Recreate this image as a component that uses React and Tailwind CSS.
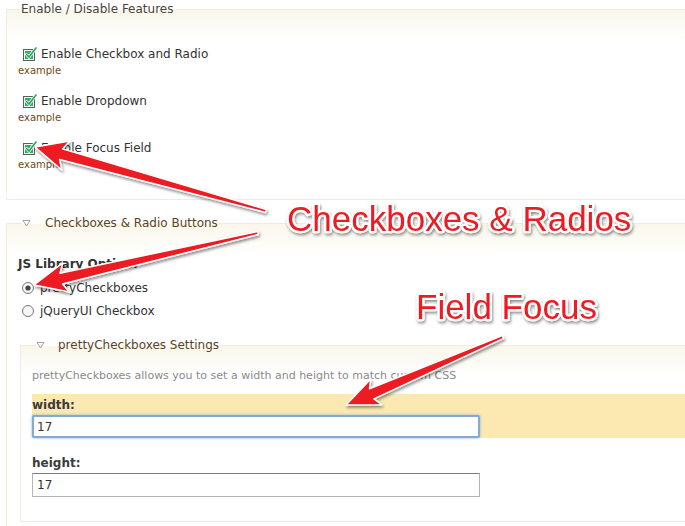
import React from 'react';

const Check = () => (
  <svg width="16" height="16" viewBox="0 0 16 16" className="shrink-0">
    <rect x="1.5" y="3.5" width="11" height="11" fill="#f4f4f4" stroke="#5d5d5d" strokeWidth="1" />
    <rect x="3" y="5" width="8" height="8" fill="#2fae68" />
    <path d="M4.5 8.5 L7 11 L14 2" fill="none" stroke="#fff" strokeWidth="3" strokeLinecap="round" />
    <path d="M4.5 8.5 L7 11 L14 2" fill="none" stroke="#27a35d" strokeWidth="1.6" strokeLinecap="round" />
  </svg>
);

const Radio = ({ on }) => (
  <svg width="14" height="14" viewBox="0 0 14 14" className="shrink-0">
    <circle cx="7" cy="7" r="5.5" fill="#f6f6f6" stroke="#777" strokeWidth="1" />
    {on && <circle cx="7" cy="7" r="2.6" fill="#444" />}
  </svg>
);

const Tri = () => (
  <svg width="9" height="8" viewBox="0 0 9 8" className="shrink-0">
    <path d="M1 1.5 H8 L4.5 7 Z" fill="none" stroke="#9a9a9a" strokeWidth="0.9" />
  </svg>
);

// tapered callout arrow, tail -> tip
const arrow = ([tx, ty], [hx, hy], headLen = 32, headHalf = 15, tailHalf = 1.5, neckHalf = 6) => {
  const dx = hx - tx, dy = hy - ty, L = Math.hypot(dx, dy);
  const ux = dx / L, uy = dy / L, nx = -uy, ny = ux;
  const bx = hx - ux * headLen, by = hy - uy * headLen;
  const p = (x, y, w, back = 0) => `${(x + nx * w - ux * back).toFixed(1)},${(y + ny * w - uy * back).toFixed(1)}`;
  return [
    p(tx, ty, tailHalf),
    p(bx, by, neckHalf),
    p(bx, by, headHalf, 5),
    `${hx},${hy}`,
    p(bx, by, -headHalf, 5),
    p(bx, by, -neckHalf),
    p(tx, ty, -tailHalf),
  ].join(' ');
};

const Overlay = () => (
  <svg className="absolute inset-0 pointer-events-none" width="685" height="526" viewBox="0 0 685 526">
    <defs>
      <filter id="sh" x="-20%" y="-20%" width="140%" height="140%">
        <feDropShadow dx="1" dy="2" stdDeviation="1.6" floodColor="#000" floodOpacity="0.45" />
      </filter>
    </defs>
    <g fill="#ec1c24" stroke="#fff" strokeWidth="1.5" strokeLinejoin="round" filter="url(#sh)">
      <polygon points={arrow([266, 211], [35, 147], 27, 15, 1.5, 5.5)} />
      <polygon points={arrow([258, 233], [34, 285], 28, 15, 1.5, 5.5)} />
      <polygon points={arrow([503, 337], [346, 405], 28, 14, 1.5, 5.5)} />
    </g>
    <g
      fontFamily="'Liberation Sans', Arial, sans-serif"
      fontSize="35"
      fill="#ec1c24"
      stroke="#fff"
      strokeWidth="4.5"
      strokeLinejoin="round"
      paintOrder="stroke"
      filter="url(#sh)"
    >
      <text x="287" y="231">Checkboxes &amp; Radios</text>
      <text x="416" y="319">Field Focus</text>
    </g>
  </svg>
);

const Feature = ({ label }) => (
  <div className="flex flex-col">
    <div className="flex items-center gap-[3px] pl-[15px] h-[18px]">
      <Check />
      <span className="text-[12px] text-[#333]">{label}</span>
    </div>
    <span className="pl-[11px] text-[10px] text-[#6e4a12] leading-[14px] mt-[1px]">example</span>
  </div>
);

export default function App() {
  return (
    <div
      className="relative w-[685px] h-[526px] overflow-hidden bg-white"
      style={{ fontFamily: "'DejaVu Sans', Verdana, sans-serif" }}
    >
      <div className="w-[760px] pl-[6px] pt-[2px]">
        <fieldset className="border border-[#f1ece1] bg-gradient-to-b from-[#faf6ea] to-white to-[30px] h-[198px]">
          <legend className="ml-[13px] px-[1px] text-[12px] text-[#4a443b] leading-[14px]">Enable / Disable Features</legend>
          <div className="flex flex-col gap-[14px] pt-[29px]">
            <Feature label="Enable Checkbox and Radio" />
            <Feature label="Enable Dropdown" />
            <Feature label="Enable Focus Field" />
          </div>
        </fieldset>

        <fieldset className="mt-[16px] border border-[#f1ece1] bg-gradient-to-b from-[#faf6ea] to-white to-[30px] h-[320px]">
          <legend className="ml-[15px] flex items-center gap-[14px] text-[12px] text-[#5a4424] leading-[14px]">
            <Tri />
            <span>Checkboxes &amp; Radio Buttons</span>
          </legend>
          <div className="pt-[27px] pl-[11px] text-[12px] font-bold text-[#333] leading-[14px]">JS Library Option:</div>
          <div className="flex flex-col gap-[9px] pt-[10px] pl-[14px]">
            <div className="flex items-center gap-[5px] h-[14px]">
              <Radio on />
              <span className="text-[12px] text-[#333]">prettyCheckboxes</span>
            </div>
            <div className="flex items-center gap-[5px] h-[14px]">
              <Radio />
              <span className="text-[12px] text-[#333]">jQueryUI Checkbox</span>
            </div>
          </div>

          <fieldset className="mt-[20px] ml-[13px] border border-[#f1ece1] bg-gradient-to-b from-[#faf6ea] to-white to-[30px] h-[184px]">
            <legend className="ml-[15px] flex items-center gap-[13px] text-[12px] text-[#5a4424] leading-[14px]">
              <Tri />
              <span>prettyCheckboxes Settings</span>
            </legend>
            <p className="pt-[17px] pl-[11px] text-[11px] text-[#8a8a8a] leading-[14px]">
              prettyCheckboxes allows you to set a width and height to match custom CSS
            </p>
            <div className="mt-[11px] ml-[11px] bg-[#fbe9b1] pt-[4px] h-[44px]">
              <div className="text-[12px] font-bold text-[#3b3b3b] leading-[14px]">width:</div>
              <div className="mt-[3px] w-[448px] h-[23px] border-[2px] border-[#84a9d4] rounded-[2px] bg-white shadow-[0_0_3px_#8fb3dc] flex items-center pl-[3px] text-[12px] text-[#333]">
                17
              </div>
            </div>
            <div className="mt-[18px] ml-[11px]">
              <div className="text-[12px] font-bold text-[#3b3b3b] leading-[14px]">height:</div>
              <div className="mt-[3px] w-[448px] h-[24px] border border-[#b5b5b5] border-t-[#7d7d7d] bg-white flex items-center pl-[4px] text-[12px] text-[#333]">
                17
              </div>
            </div>
          </fieldset>
        </fieldset>
      </div>
      <Overlay />
    </div>
  );
}
